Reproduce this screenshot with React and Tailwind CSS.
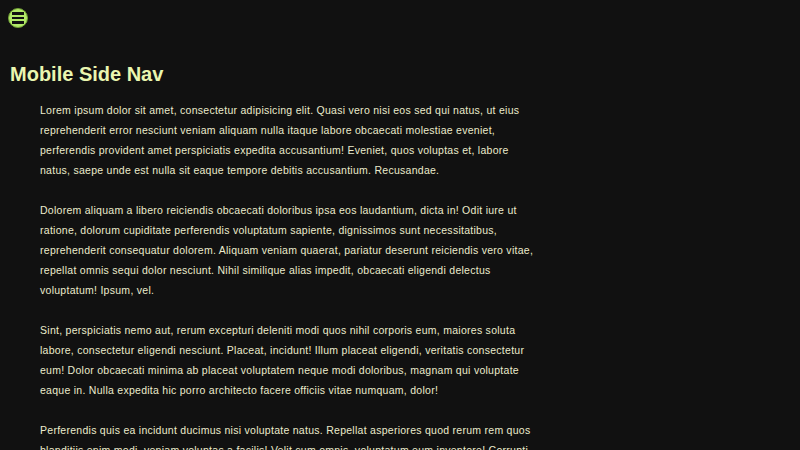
const paragraphs = [
  'Lorem ipsum dolor sit amet, consectetur adipisicing elit. Quasi vero nisi eos sed qui natus, ut eius reprehenderit error nesciunt veniam aliquam nulla itaque labore obcaecati molestiae eveniet, perferendis provident amet perspiciatis expedita accusantium! Eveniet, quos voluptas et, labore natus, saepe unde est nulla sit eaque tempore debitis accusantium. Recusandae.',
  'Dolorem aliquam a libero reiciendis obcaecati doloribus ipsa eos laudantium, dicta in! Odit iure ut ratione, dolorum cupiditate perferendis voluptatum sapiente, dignissimos sunt necessitatibus, reprehenderit consequatur dolorem. Aliquam veniam quaerat, pariatur deserunt reiciendis vero vitae, repellat omnis sequi dolor nesciunt. Nihil similique alias impedit, obcaecati eligendi delectus voluptatum! Ipsum, vel.',
  'Sint, perspiciatis nemo aut, rerum excepturi deleniti modi quos nihil corporis eum, maiores soluta labore, consectetur eligendi nesciunt. Placeat, incidunt! Illum placeat eligendi, veritatis consectetur eum! Dolor obcaecati minima ab placeat voluptatem neque modi doloribus, magnam qui voluptate eaque in. Nulla expedita hic porro architecto facere officiis vitae numquam, dolor!',
  'Perferendis quis ea incidunt ducimus nisi voluptate natus. Repellat asperiores quod rerum rem quos blanditiis enim modi, veniam voluptas a facilis! Velit cum omnis, voluptatum eum inventore! Corrupti, voluptatem. Quasi, sapiente. Ipsum tempore placeat cum dolores est magnam id eaque.',
];

const MenuButton = () => (
    <button className="w-5 h-5 rounded-full bg-[#b2ea68] border border-[#6f9e34] flex flex-col items-center justify-center gap-[2px]">
        <span className="block w-[12px] h-[2.5px] bg-[#111111]" />
        <span className="block w-[12px] h-[2.5px] bg-[#111111]" />
        <span className="block w-[12px] h-[2.5px] bg-[#111111]" />
    </button>
);

export default function App() {
    return (
        <div className="min-h-screen bg-[#111111] font-['Liberation_Sans',Arial,sans-serif]">
            <nav className="pl-[8px] pt-[8px]">
                <MenuButton />
            </nav>
            <main>
                <h1 className="px-[10px] mt-[34px] text-[20px] leading-[24px] font-bold text-[#eaf6b0]">Mobile Side Nav</h1>
                <div className="mt-[14px] pl-[40px] max-w-[538px]">
                    {paragraphs.map((p, i) => (
                        <p key={i} className="mb-[20px] text-[10.5px] leading-[20px] tracking-[0.27px] text-[#ebebcc]">{p}</p>
                    ))}
                </div>
            </main>
        </div>
    );
}
